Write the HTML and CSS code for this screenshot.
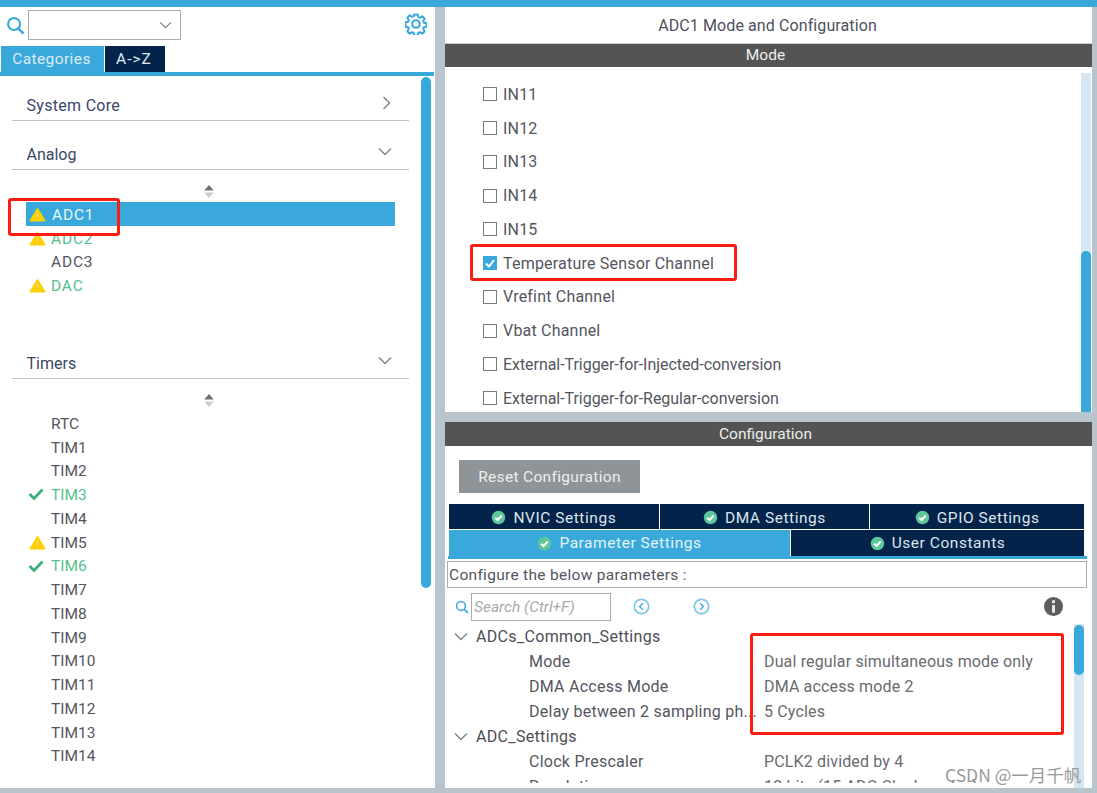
FILE: index.html
```html
<!DOCTYPE html>
<html lang="en">
<head>
<meta charset="utf-8">
<title>ADC1 Mode and Configuration</title>
<link rel="stylesheet" href="styles.css">
</head>
<body>
<svg class="sprite" aria-hidden="true">
  <symbol id="warn" viewBox="0 0 18 16"><path d="M9 2 16.600 14.500H1.400Z" fill="#fdd000" stroke="#fdd000" stroke-width="1.800" stroke-linejoin="round"/><path d="M9 6V11M9 12.200v1.400" stroke="#f2dc8c" stroke-width="1.300"/></symbol>
  <symbol id="tick" viewBox="0 0 16 14"><path d="M1.500 7 6 11.500 14.500 2.500" fill="none" stroke="#3fae78" stroke-width="2.800"/></symbol>
  <symbol id="search" viewBox="0 0 20 20"><circle cx="8.500" cy="8.500" r="6.300" fill="none" stroke="#39a9dc" stroke-width="2.200"/><path d="M13 13 18.500 18.500" stroke="#39a9dc" stroke-width="2.600"/></symbol>
  <symbol id="ok" viewBox="0 0 16 16"><circle cx="8" cy="8" r="7.200" fill="#5bc79a"/><path d="M4.500 8.200 7 10.700 11.500 5.800" fill="none" stroke="#fff" stroke-width="2.200"/></symbol>
  <symbol id="updown" viewBox="0 0 12 16"><path d="M6 1 11 7H1Z" fill="#6b6f72"/><path d="M6 15 11 9H1Z" fill="#c9cdd0"/></symbol>
  <symbol id="down" viewBox="0 0 14 9"><path d="M1 1.500 7 7.500 13 1.500" fill="none" stroke="#7d8489" stroke-width="1.400"/></symbol>
  <symbol id="right" viewBox="0 0 9 14"><path d="M1.500 1 7.500 7 1.500 13" fill="none" stroke="#7d8489" stroke-width="1.400"/></symbol>
  <symbol id="gear" viewBox="0 0 22 22"><path d="M9.200 1.500h3.600l.5 2.600 1.700.7 2.200-1.500 2.500 2.500-1.500 2.200.7 1.700 2.600.5v3.600l-2.600.5-.7 1.700 1.500 2.200-2.500 2.500-2.200-1.500-1.700.7-.5 2.600H9.200l-.5-2.600-1.700-.7-2.200 1.500-2.500-2.500 1.500-2.200-.7-1.700-2.600-.5V9.200l2.600-.5.700-1.700-1.500-2.200 2.500-2.500 2.200 1.500 1.700-.7Z" fill="none" stroke="#39a9dc" stroke-width="2" stroke-linejoin="round"/><circle cx="11" cy="11" r="3.800" fill="none" stroke="#39a9dc" stroke-width="2"/></symbol>
  <symbol id="prev" viewBox="0 0 18 18"><circle cx="9" cy="9" r="7.600" fill="none" stroke="#7cc8ea" stroke-width="1.800"/><path d="M10.500 5.500 7 9l3.500 3.500" fill="none" stroke="#39a9dc" stroke-width="1.400"/></symbol>
  <symbol id="next" viewBox="0 0 18 18"><circle cx="9" cy="9" r="7.600" fill="none" stroke="#7cc8ea" stroke-width="1.800"/><path d="M7.500 5.500 11 9l-3.500 3.500" fill="none" stroke="#39a9dc" stroke-width="1.400"/></symbol>
  <symbol id="info" viewBox="0 0 20 20"><circle cx="10" cy="10" r="10" fill="#5c5d5e"/><circle cx="10" cy="5" r="1.800" fill="#e8e8e8"/><path d="M10 8.500V16.500" stroke="#e8e8e8" stroke-width="3.200"/></symbol>
</svg>

<div class="topbar"></div>
<div class="app">
  <aside class="left">
    <div class="toolbar">
      <svg class="i-search"><use href="#search"/></svg>
      <div class="combo"><svg class="i-down"><use href="#down"/></svg></div>
      <svg class="i-gear"><use href="#gear"/></svg>
    </div>
    <div class="tabs">
      <div class="tab tab-on">Categories</div>
      <div class="tab tab-off">A-&gt;Z</div>
    </div>
    <div class="left-body">
      <div class="tree">
        <div class="cat cat-first"><span>System Core</span><svg class="i-right"><use href="#right"/></svg></div>
        <div class="cat"><span>Analog</span><svg class="i-cat-down"><use href="#down"/></svg></div>
        <div class="sorter"><svg class="i-updown"><use href="#updown"/></svg></div>
        <ul class="items items-analog">
          <li class="item selected"><svg class="i-warn"><use href="#warn"/></svg>ADC1</li>
          <li class="item green"><svg class="i-warn"><use href="#warn"/></svg>ADC2</li>
          <li class="item">ADC3</li>
          <li class="item green"><svg class="i-warn"><use href="#warn"/></svg>DAC</li>
        </ul>
        <div class="cat"><span>Timers</span><svg class="i-cat-down"><use href="#down"/></svg></div>
        <div class="sorter"><svg class="i-updown"><use href="#updown"/></svg></div>
        <ul class="items">
          <li class="item">RTC</li>
          <li class="item">TIM1</li>
          <li class="item">TIM2</li>
          <li class="item green"><svg class="i-tick"><use href="#tick"/></svg>TIM3</li>
          <li class="item">TIM4</li>
          <li class="item"><svg class="i-warn"><use href="#warn"/></svg>TIM5</li>
          <li class="item green"><svg class="i-tick"><use href="#tick"/></svg>TIM6</li>
          <li class="item">TIM7</li>
          <li class="item">TIM8</li>
          <li class="item">TIM9</li>
          <li class="item">TIM10</li>
          <li class="item">TIM11</li>
          <li class="item">TIM12</li>
          <li class="item">TIM13</li>
          <li class="item">TIM14</li>
        </ul>
      </div>
      <div class="vbar vbar-left"></div>
    </div>
  </aside>

  <main class="right">
    <section class="mode">
      <h1 class="title">ADC1 Mode and Configuration</h1>
      <div class="bar bar-mode">Mode</div>
      <div class="mode-body">
        <ul class="checks">
          <li class="check"><span class="box"></span>IN11</li>
          <li class="check"><span class="box"></span>IN12</li>
          <li class="check"><span class="box"></span>IN13</li>
          <li class="check"><span class="box"></span>IN14</li>
          <li class="check"><span class="box"></span>IN15</li>
          <li class="check"><span class="box box-on"><svg viewBox="0 0 14 14"><path d="M3 7.500 6 10.500 11 4" fill="none" stroke="#fff" stroke-width="2"/></svg></span>Temperature Sensor Channel</li>
          <li class="check"><span class="box"></span>Vrefint Channel</li>
          <li class="check"><span class="box"></span>Vbat Channel</li>
          <li class="check check-tight"><span class="box"></span>External-Trigger-for-Injected-conversion</li>
          <li class="check check-tight"><span class="box"></span>External-Trigger-for-Regular-conversion</li>
        </ul>
        <div class="vbar vbar-mode"></div>
      </div>
    </section>

    <section class="config">
      <div class="bar">Configuration</div>
      <button class="reset" type="button">Reset Configuration</button>
      <div class="ctabs ctabs-1">
        <div class="ctab"><svg class="i-ok"><use href="#ok"/></svg>NVIC Settings</div>
        <div class="ctab"><svg class="i-ok"><use href="#ok"/></svg>DMA Settings</div>
        <div class="ctab ctab-wide"><svg class="i-ok"><use href="#ok"/></svg>GPIO Settings</div>
      </div>
      <div class="ctabs ctabs-2">
        <div class="ctab ctab-on"><svg class="i-ok"><use href="#ok"/></svg>Parameter Settings</div>
        <div class="ctab ctab-user"><svg class="i-ok"><use href="#ok"/></svg>User Constants</div>
      </div>
      <div class="rule"></div>
      <div class="hint">Configure the below parameters :</div>
      <div class="finder">
        <svg class="i-search-s"><use href="#search"/></svg>
        <div class="find-input">Search (Ctrl+F)</div>
        <svg class="i-nav i-prev"><use href="#prev"/></svg>
        <svg class="i-nav i-next"><use href="#next"/></svg>
        <svg class="i-info"><use href="#info"/></svg>
      </div>
      <div class="params">
        <div class="param-list">
          <div class="group"><svg class="i-tree"><use href="#down"/></svg>ADCs_Common_Settings</div>
          <div class="param"><span class="pname">Mode</span><span class="pval">Dual regular simultaneous mode only</span></div>
          <div class="param"><span class="pname">DMA Access Mode</span><span class="pval">DMA access mode 2</span></div>
          <div class="param"><span class="pname">Delay between 2 sampling ph...</span><span class="pval">5 Cycles</span></div>
          <div class="group"><svg class="i-tree"><use href="#down"/></svg>ADC_Settings</div>
          <div class="param"><span class="pname">Clock Prescaler</span><span class="pval">PCLK2 divided by 4</span></div>
          <div class="param"><span class="pname">Resolution</span><span class="pval">12 bits (15 ADC Clock cycles)</span></div>
        </div>
        <div class="vbar vbar-params"></div>
      </div>
    </section>
  </main>
</div>

<div class="mark mark-adc"></div>
<div class="mark mark-temp"></div>
<div class="mark mark-vals"></div>
<div class="watermark">CSDN @一月千帆</div>
</body>
</html>
```
FILE: styles.css
```css
* { box-sizing: border-box; }
html, body { margin: 0; padding: 0; height: 793px; overflow: hidden; }
body {
  position: relative;
  background: #b9c5cc;
  font-family: Roboto, "Noto Sans CJK SC", sans-serif;
  font-size: 15.5px;
  color: #55555f;
}
ul { list-style: none; margin: 0; padding: 0; }
.sprite { display: none; }
svg { display: block; flex: none; }

.topbar { height: 7px; background: #39a9dc; }
.app { display: flex; height: 781px; gap: 10px; }

/* left column */
.left { width: 435px; background: #fff; display: flex; flex-direction: column; }
.toolbar { height: 39px; display: flex; align-items: center; padding: 0 0 3px 6px; }
.i-search { width: 19px; height: 19px; margin: 0 3px 0 0; }
.combo { width: 153px; height: 30px; border: 1.5px solid #a9acae; display: flex; align-items: center; justify-content: flex-end; padding-right: 8px; }
.i-down { width: 13px; height: 8px; }
.i-gear { width: 22px; height: 22px; margin: 0 8px 2px auto; }
.tabs { display: flex; gap: 1px; height: 26px; padding-left: 1px; }
.tab { display: flex; align-items: center; justify-content: center; color: #dcecf5; letter-spacing: .4px; }
.tab-on { width: 103px; padding-right: 2px; background: #39a9dc; }
.tab-off { width: 60px; padding-right: 2px; background: #03234b; letter-spacing: 1px; }
.left-body { flex: 1; min-height: 0; display: flex; border-top: 4px solid #39a9dc; margin-right: 1px; }
.tree { flex: 1; min-width: 0; overflow: hidden; padding: 0 12px; }
.cat { display: flex; align-items: center; justify-content: space-between; height: 49px; padding: 18px 17px 0 14.5px; border-bottom: 1px solid #b9c5cc; color: #3b4668; font-size: 16px; }
.cat-first { height: 45px; padding-top: 14px; letter-spacing: .3px; }
.i-right { width: 9px; height: 14px; margin: -4px 1px 0 0; }
.i-cat-down { width: 14px; height: 9px; margin-top: -6px; }
.sorter { height: 32px; display: flex; align-items: flex-end; justify-content: center; padding: 0 4px 3px 0; }
.i-updown { width: 12px; height: 15px; }
.items { margin: 0 14px; }
.items-analog { height: 128px; letter-spacing: .8px; }
.item { height: 23.75px; display: flex; align-items: center; padding: 2px 0 0 25px; position: relative; }
.item.green { color: #57bf8d; }
.item.selected { background: #39a9dc; color: #eaf5fb; padding-left: 26px; }
.i-warn, .i-tick { position: absolute; left: 3px; top: 5px; }
.i-warn { width: 17px; height: 15px; }
.i-tick { width: 16px; height: 14px; left: 2px; top: 5px; }
.vbar { flex: none; background: #d6e6f3; width: 10px; position: relative; }
.vbar::after { content: ""; position: absolute; left: 0; right: 0; background: #39a9dc; border-radius: 5px; }
.vbar-left { background: #fff; margin: 1px 3px 0 0; height: 710px; }
.vbar-left::after { top: 0; height: 511px; }

/* right column */
.right { width: 647px; display: flex; flex-direction: column; gap: 10px; }
.mode { background: #fff; height: 405px; display: flex; flex-direction: column; }
.title { margin: 0; height: 37px; padding: 1px 2px 0 0; font-size: 16px; font-weight: 400; letter-spacing: .1px; display: flex; align-items: center; justify-content: center; color: #50505c; border-bottom: 1px solid #c8cccc; }
.bar { height: 24px; padding-right: 6px; background: #535453; color: #eee; display: flex; align-items: center; justify-content: center; }
.bar-mode { height: 23px; padding-bottom: 1px; }
.mode-body { flex: 1; min-height: 0; display: flex; }
.checks { flex: 1; padding: 10.500px 0 0 38px; font-size: 16px; letter-spacing: .2px; }
.check { height: 33.75px; display: flex; align-items: center; gap: 6px; }
.check-tight { letter-spacing: -.05px; }
.box { width: 14px; height: 14px; border: 1.5px solid #77797b; background: #fff; flex: none; }
.box-on { background: #39a9dc; border-color: #39a9dc; }
.box-on svg { width: 14px; height: 14px; margin: -1.5px; }
.vbar-mode { margin: 6px 1px 0 0; }
.vbar-mode::after { top: 178px; bottom: 0; border-radius: 5px 5px 0 0; }

.config { flex: 1; min-height: 0; background: #fff; display: flex; flex-direction: column; }
.reset { align-self: flex-start; width: 181px; height: 33px; margin: 14px 0 11px 14px; border: 0; background: #8f9499; color: #eceeef; font: inherit; letter-spacing: .33px; }
.ctabs { display: flex; gap: 1px; height: 25px; margin: 0 8px 0 4px; }
.ctabs-1 .ctab { padding-top: 2px; }
.ctabs-2 { height: 26px; margin-top: 1px; }
.ctab { flex: 1 1 0; background: #03234b; color: #dbe6ee; display: flex; align-items: center; justify-content: center; gap: 7px; letter-spacing: .55px; }
.ctab-wide { flex: 1.02 1 0; }
.ctab-on { flex: none; width: 341px; background: #39a9dc; color: #e6f3fa; }
.ctab-user { flex: 1; }
.i-ok { width: 15px; height: 15px; }
.rule { height: 3px; background: #39a9dc; margin: 0 5px 0 3px; }
.hint { height: 27px; margin: 2px 5px 0 2px; border: 1px solid #a9acae; display: flex; align-items: center; padding-left: 1px; letter-spacing: .3px; }
.finder { height: 33px; margin-top: 2px; display: flex; align-items: center; padding-left: 10px; }
.i-search-s { width: 14px; height: 14px; margin-right: 2px; }
.find-input { width: 140px; height: 28px; border: 1.5px solid #a9acae; display: flex; align-items: center; padding-left: 2px; color: #a7a9ac; font-style: italic; }
.i-nav { width: 17px; height: 17px; }
.i-prev { margin-left: 22px; }
.i-next { margin-left: 43px; }
.i-info { width: 19px; height: 19px; margin: -1px 0 0 334px; }
.params { flex: 1; min-height: 0; display: flex; margin-top: 1px; font-size: 16px; }
.param-list { flex: 1; min-width: 0; overflow: hidden; margin-bottom: 5px; }
.group { height: 25px; display: flex; align-items: center; padding-left: 9px; color: #4d4d55; letter-spacing: .33px; }
.i-tree { width: 14px; height: 9px; margin-right: 8px; }
.param { height: 25px; display: flex; align-items: center; padding-left: 84px; }
.pname { width: 235px; flex: none; white-space: nowrap; overflow: hidden; letter-spacing: .25px; }
.pval { color: #6a6a70; white-space: nowrap; letter-spacing: .15px; }
.vbar-params { margin-right: 8px; }
.vbar-params::after { top: 1px; height: 50px; }

/* annotations drawn on top of the screenshot */
.mark { position: absolute; border: 3px solid #fb1c12; border-radius: 3px; pointer-events: none; }
.mark-adc { left: 8px; top: 198px; width: 112px; height: 38px; }
.mark-temp { left: 470px; top: 244px; width: 267px; height: 37px; }
.mark-vals { left: 750px; top: 633px; width: 314px; height: 102px; }
.watermark { position: absolute; left: 945px; top: 765px; color: #999; font-size: 17.5px; white-space: nowrap; font-family: "Noto Sans CJK SC", sans-serif; line-height: 20px; }
```
